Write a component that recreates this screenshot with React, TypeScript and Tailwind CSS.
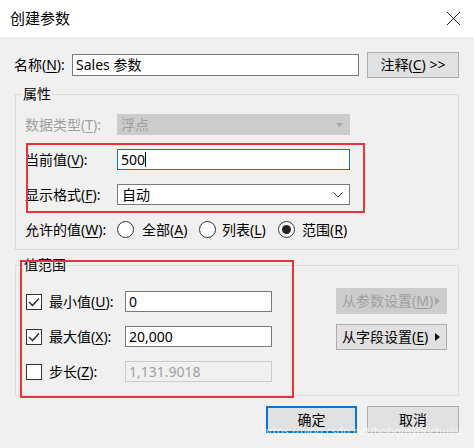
import React from 'react';

const Mn = ({ c }: { c: string }) => <span className="underline underline-offset-2">{c}</span>;

function Check({ on }: { on: boolean }) {
  return (
    <div className="w-[16px] h-[16px] border border-[#333] bg-white flex items-center justify-center shrink-0">
      {on && (
        <svg width="14" height="14" viewBox="0 0 14 14">
          <polyline points="2,7 5.5,10.5 12,3.5" fill="none" stroke="#222" strokeWidth="1.3" />
        </svg>
      )}
    </div>
  );
}

function Radio({ on }: { on: boolean }) {
  return (
    <div className="w-[17px] h-[17px] rounded-full border border-[#333] bg-white flex items-center justify-center shrink-0">
      {on && <div className="w-[9px] h-[9px] rounded-full bg-[#222]" />}
    </div>
  );
}

function Arrow({ dim }: { dim?: boolean }) {
  return (
    <svg width="5" height="8" viewBox="0 0 5 8" className="ml-auto shrink-0">
      <polygon points="0,0 5,4 0,8" fill={dim ? '#a8a8a8' : '#111'} />
    </svg>
  );
}

export default function App() {
  return (
    <div className="relative w-[474px] h-[448px] bg-[#f0f0f0] text-[14px] leading-none text-black font-['Noto_Sans','Noto_Sans_CJK_SC',sans-serif] overflow-hidden">
      {/* title bar */}
      <div className="h-[37px] bg-white flex items-center justify-between pl-[10px] pr-[13px]">
        <span className="text-[15px]">创建参数</span>
        <svg width="15" height="15" viewBox="0 0 15 15">
          <line x1="1" y1="1" x2="14" y2="14" stroke="#222" strokeWidth="1" />
          <line x1="14" y1="1" x2="1" y2="14" stroke="#222" strokeWidth="1" />
        </svg>
      </div>

      <div className="pl-[14px] pt-[15px]">
        {/* name */}
        <div className="flex items-center h-[26px]">
          <span className="w-[58px]">名称(<Mn c="N" />):</span>
          <div className="w-[287px] h-[22px] border border-[#7a7a7a] bg-white px-[3px] flex items-center">Sales 参数</div>
          <button className="ml-[8px] w-[92px] h-[26px] border border-[#adadad] bg-[#e1e1e1] whitespace-nowrap">注释(<Mn c="C" />) &gt;&gt;</button>
        </div>

        {/* 属性 */}
        <fieldset className="mt-[6px] ml-[1px] w-[444px] border border-[#dcdcdc]">
          <legend className="ml-[6px] px-[1px] leading-[20px]">属性</legend>
          <div className="pl-[9px] pt-[10px] pb-[9px] flex flex-col gap-[14px]">
            <div className="flex items-center h-[21px]">
              <span className="w-[92px] text-[#a0a0a0]">数据类型(<Mn c="T" />):</span>
              <div className="w-[233px] h-[21px] bg-[#cccccc] px-[4px] flex items-center text-[#a0a0a0]">
                浮点
                <svg width="7" height="4" viewBox="0 0 7 4" className="ml-auto mr-[3px]">
                  <polygon points="0,0 7,0 3.5,4" fill="#a8a8a8" />
                </svg>
              </div>
            </div>
            <div className="flex items-center h-[21px]">
              <span className="w-[92px]">当前值(<Mn c="V" />):</span>
              <div className="w-[233px] h-[21px] border border-[#0078d7] bg-white px-[3px] flex items-center">
                500<span className="w-px h-[15px] bg-black" />
              </div>
            </div>
            <div className="flex items-center h-[21px]">
              <span className="w-[92px]">显示格式(<Mn c="F" />):</span>
              <div className="w-[233px] h-[21px] border border-[#7a7a7a] bg-white px-[4px] flex items-center">
                自动
                <svg width="10" height="6" viewBox="0 0 10 6" className="ml-auto mr-[2px]">
                  <polyline points="0.5,0.5 5,5 9.5,0.5" fill="none" stroke="#333" strokeWidth="1" />
                </svg>
              </div>
            </div>
            <div className="flex items-center h-[21px]">
              <span className="w-[92px]">允许的值(<Mn c="W" />):</span>
              <Radio on={false} />
              <span className="ml-[8px] w-[57px] shrink-0 whitespace-nowrap">全部(<Mn c="A" />)</span>
              <Radio on={false} />
              <span className="ml-[6px] w-[56px] shrink-0 whitespace-nowrap">列表(<Mn c="L" />)</span>
              <Radio on={true} />
              <span className="ml-[7px] whitespace-nowrap">范围(<Mn c="R" />)</span>
            </div>
          </div>
        </fieldset>

        {/* 值范围 */}
        <fieldset className="mt-[5px] ml-[1px] w-[444px] border border-[#dcdcdc]">
          <legend className="ml-[7px] px-[1px] leading-[20px]">值范围</legend>
          <div className="flex pb-[13px]">
            <div className="pl-[10px] pt-[16px] flex flex-col gap-[14px]">
              <div className="flex items-center h-[21px]">
                <Check on={true} />
                <span className="ml-[7px] w-[76px]">最小值(<Mn c="U" />):</span>
                <div className="w-[147px] h-[21px] border border-[#7a7a7a] bg-white px-[3px] flex items-center">0</div>
              </div>
              <div className="flex items-center h-[21px]">
                <Check on={true} />
                <span className="ml-[7px] w-[76px]">最大值(<Mn c="X" />):</span>
                <div className="w-[147px] h-[21px] border border-[#7a7a7a] bg-white px-[3px] flex items-center">20,000</div>
              </div>
              <div className="flex items-center h-[21px]">
                <Check on={false} />
                <span className="ml-[7px] w-[76px]">步长(<Mn c="Z" />):</span>
                <div className="w-[147px] h-[21px] border border-[#cccccc] bg-[#f0f0f0] px-[3px] flex items-center text-[#a0a0a0]">1,131.9018</div>
              </div>
            </div>
            <div className="ml-auto mr-[11px] pt-[13px] flex flex-col gap-[10px]">
              <button className="w-[111px] h-[26px] bg-[#cccccc] border border-[#cccccc] text-[#a0a0a0] flex items-center pl-[5px] pr-[6px] whitespace-nowrap">
                从参数设置(<Mn c="M" />)<Arrow dim />
              </button>
              <button className="w-[111px] h-[26px] bg-[#e1e1e1] border border-[#adadad] flex items-center pl-[5px] pr-[6px] whitespace-nowrap">
                从字段设置(<Mn c="E" />)<Arrow />
              </button>
            </div>
          </div>
        </fieldset>

        {/* footer */}
        <div className="mt-[10px] w-[445px] flex justify-end gap-[10px]">
          <button className="w-[91px] h-[27px] border-2 border-[#0078d7] bg-[#e1e1e1]">确定</button>
          <button className="w-[92px] h-[27px] border border-[#adadad] bg-[#e1e1e1]">取消</button>
        </div>
      </div>

      {/* annotation boxes */}
      <div className="absolute left-[26px] top-[143px] w-[339px] h-[70px] border-2 border-[#e8323c]" />
      <div className="absolute left-[20px] top-[260px] w-[274px] h-[138px] border-2 border-[#e8323c]" />
      <span className="absolute left-[262px] top-[425px] text-[11px] text-[#ffffff]/70 whitespace-nowrap">https://blog.csdn.net/bobomybochuijia</span>
    </div>
  );
}
